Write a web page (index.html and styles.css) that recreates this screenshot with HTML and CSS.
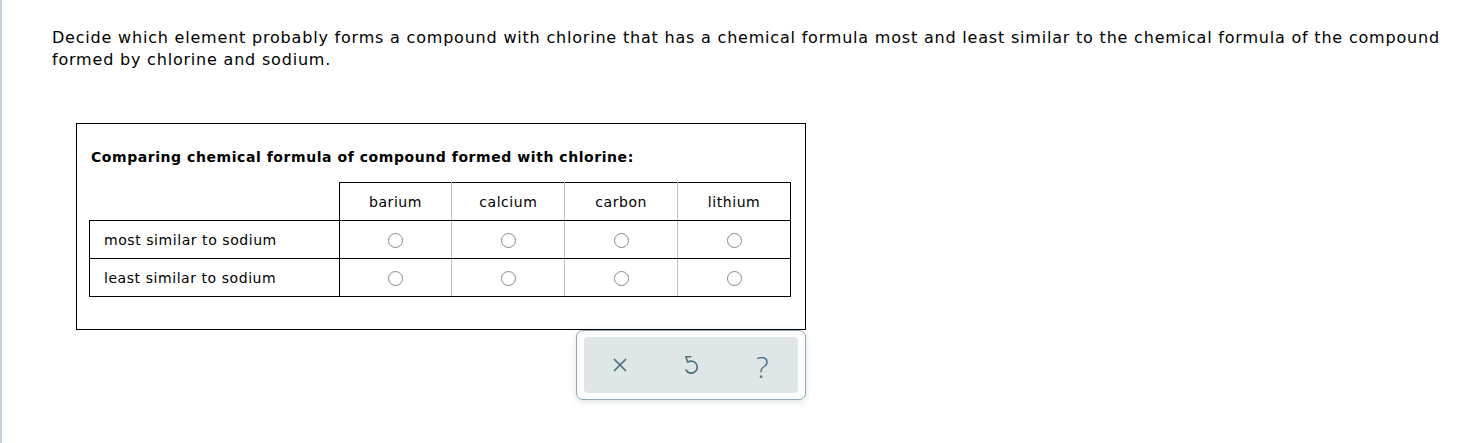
FILE: index.html
```html
<!DOCTYPE html>
<html lang="en">
<head>
  <meta charset="UTF-8" />
  <title>Chlorine compounds</title>
  <link rel="stylesheet" href="styles.css">
</head>
<body>
  <div class="page">
    <p class="question">Decide which element probably forms a compound with chlorine that has a chemical formula most and least similar to the chemical formula of the compound formed by chlorine and sodium.</p>

    <div class="answer">
      <div class="card">
        <h2>Comparing chemical formula of compound formed with chlorine:</h2>
        <table class="grid">
          <thead>
            <tr>
              <th class="blank"></th>
              <th>barium</th>
              <th>calcium</th>
              <th>carbon</th>
              <th>lithium</th>
            </tr>
          </thead>
          <tbody>
            <tr>
              <td class="label">most similar to sodium</td>
              <td><span class="radio"></span></td>
              <td><span class="radio"></span></td>
              <td><span class="radio"></span></td>
              <td><span class="radio"></span></td>
            </tr>
            <tr>
              <td class="label">least similar to sodium</td>
              <td><span class="radio"></span></td>
              <td><span class="radio"></span></td>
              <td><span class="radio"></span></td>
              <td><span class="radio"></span></td>
            </tr>
          </tbody>
        </table>
      </div>

      <div class="toolbar">
        <div class="toolbar-inner">
          <button class="tool" title="Clear">
            <svg width="14" height="14" viewBox="0 0 14 14"><path d="M1.5 1.5 L12.5 12.5 M12.5 1.5 L1.5 12.5" stroke="currentColor" stroke-width="1.7" fill="none" stroke-linecap="round"/></svg>
          </button>
          <button class="tool" title="Undo">
            <svg width="16" height="22" viewBox="0 0 16 22"><path d="M7.8 2.8 H2.8 L4.8 8.2 A6 6 0 1 1 3 16" stroke="currentColor" stroke-width="1.6" fill="none" stroke-linecap="round" stroke-linejoin="round"/></svg>
          </button>
          <button class="tool help" title="Help">?</button>
        </div>
      </div>
    </div>
  </div>
</body>
</html>
```

FILE: styles.css
```css
:root {
  --edge: #c5d4dc;
  --text: #000;
  --rule: #bdbdbd;
  --tool-bg: #dfe6e8;
  --tool-fg: #4b6f7b;
}

* {
  box-sizing: border-box;
  margin: 0;
  padding: 0;
}

body {
  font-family: "DejaVu Sans", Verdana, sans-serif;
  color: var(--text);
  background: #fff;
}

.page {
  min-height: 100vh;
  border-left: 2px solid var(--edge);
  padding: 27px 20px 0 50px;
}

.question {
  font-size: 16px;
  line-height: 22px;
  letter-spacing: 0.05em;
}

.answer {
  width: 730px;
  margin: 52px 0 0 24px;
  display: flex;
  flex-direction: column;
}

.card {
  border: 1px solid #000;
  height: 207px;
  padding: 24px 13px 0 12px;
}

.card h2 {
  font-size: 14px;
  font-weight: 700;
  line-height: 18px;
  letter-spacing: 0.04em;
  padding-left: 2px;
  margin-bottom: 16px;
}

.grid {
  border-collapse: collapse;
  font-size: 14px;
  letter-spacing: 0.04em;
  width: 702px;
}

.grid th,
.grid td {
  height: 38px;
  width: 113px;
  text-align: center;
  font-weight: 400;
  border: 1px solid #000;
  border-left-color: var(--rule);
  border-right-color: var(--rule);
}

.grid th:last-child,
.grid td:last-child {
  border-right-color: #000;
}

.grid th.blank {
  border: none;
  border-bottom: 1px solid #000;
  width: 250px;
}

.grid td.label {
  width: 250px;
  text-align: left;
  padding-left: 14px;
  border-left-color: #000;
  border-right-color: #000;
}

.grid th:nth-child(2),
.grid td:nth-child(2) {
  border-left-color: #000;
}

.radio {
  display: inline-block;
  width: 15px;
  height: 15px;
  border: 1px solid #8a8a8a;
  border-radius: 50%;
  vertical-align: middle;
  margin-top: 2px;
}

.toolbar {
  align-self: flex-end;
  width: 230px;
  height: 70px;
  padding: 6px 7px;
  border: 1px solid #8fa7b0;
  border-radius: 7px;
  background: #fff;
  box-shadow: 0 2px 6px rgba(80, 110, 120, 0.2);
}

.toolbar-inner {
  display: flex;
  height: 100%;
  background: var(--tool-bg);
  border-radius: 4px;
}

.tool {
  flex: 1;
  border: none;
  background: transparent;
  color: var(--tool-fg);
  display: flex;
  align-items: center;
  justify-content: center;
  cursor: pointer;
}

.tool.help {
  font-family: "Open Sans", "DejaVu Sans", sans-serif;
  font-size: 30px;
  font-weight: 300;
  padding-top: 2px;
}
```
